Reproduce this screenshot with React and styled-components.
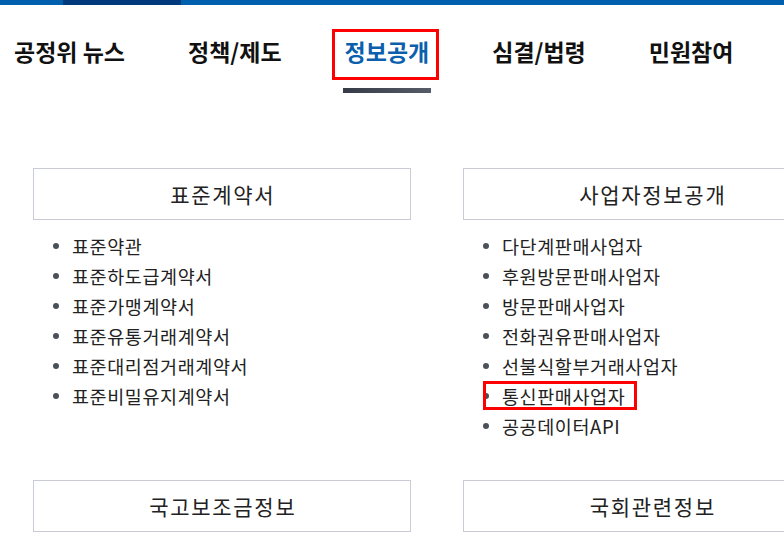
import React from 'react';
import styled, { createGlobalStyle } from 'styled-components';

const GlobalStyle = createGlobalStyle`
  html, body {
    margin: 0;
    padding: 0;
    background: #fff;
    overflow: hidden;
  }
  body {
    font-family: "Noto Sans CJK KR", "Noto Sans", sans-serif;
    color: #222;
  }
  * { box-sizing: border-box; }
`;

const TopBar = styled.div`
  height: 5px;
  background: #0060ae;
  padding-left: 63px;
`;

const TopBarSegment = styled.div`
  width: 118px;
  height: 100%;
  background: #003a7c;
`;

const Nav = styled.nav`
  display: flex;
  align-items: flex-start;
  gap: 63px;
  padding: 31px 0 0 14px;
  height: 92px;
`;

const NavItem = styled.div`
  display: flex;
  flex-direction: column;
`;

const NavLabel = styled.a`
  position: relative;
  font-size: 23px;
  font-weight: 700;
  line-height: 30px;
  white-space: nowrap;
  color: ${(p) => (p.$active ? '#0b5fad' : '#111')};
  text-decoration: none;

  ${(p) =>
    p.$marked &&
    `
    &::after {
      content: '';
      position: absolute;
      left: -13px;
      right: -10px;
      top: -7px;
      bottom: -14px;
      border: 3px solid #f00;
    }
  `}
`;

const Indicator = styled.span`
  display: block;
  height: 5px;
  margin: 22px -2px 0 -2px;
  background: linear-gradient(90deg, #363c47, #575d68);
`;

const Content = styled.main`
  display: grid;
  grid-template-columns: 378px 378px;
  column-gap: 52px;
  row-gap: 39px;
  padding: 71px 0 0 33px;
`;

const Section = styled.section`
  display: flex;
  flex-direction: column;
`;

const BoxTitle = styled.h2`
  margin: 0;
  height: 52px;
  display: flex;
  align-items: center;
  justify-content: center;
  border: 1px solid #c9ccd6;
  font-size: 21px;
  font-weight: 400;
  letter-spacing: 1.7px;
  text-indent: 1.7px;
  color: #222;
`;

const List = styled.ul`
  list-style: none;
  margin: 11px 0 0;
  padding: 0 0 0 20px;
`;

const Item = styled.li`
  position: relative;
  display: flex;
  align-items: center;
  gap: 13px;
  width: fit-content;
  font-size: 18.5px;
  letter-spacing: 0.6px;
  line-height: 30px;
  color: #222;
  white-space: nowrap;

  &::before {
    content: '';
    flex: none;
    width: 6px;
    height: 6px;
    border-radius: 50%;
    background: #4a4f58;
  }

  ${(p) =>
    p.$marked &&
    `
    &::after {
      content: '';
      position: absolute;
      left: 0;
      right: -12px;
      top: 0;
      bottom: 1px;
      border: 3px solid #f00;
    }
  `}
`;

const menu = [
  { label: '공정위 뉴스' },
  { label: '정책/제도' },
  { label: '정보공개', active: true },
  { label: '심결/법령' },
  { label: '민원참여' },
];

const sections = [
  {
    title: '표준계약서',
    items: ['표준약관', '표준하도급계약서', '표준가맹계약서', '표준유통거래계약서', '표준대리점거래계약서', '표준비밀유지계약서'],
  },
  {
    title: '사업자정보공개',
    items: ['다단계판매사업자', '후원방문판매사업자', '방문판매사업자', '전화권유판매사업자', '선불식할부거래사업자', '통신판매사업자', '공공데이터API'],
    marked: '통신판매사업자',
  },
  { title: '국고보조금정보', items: [] },
  { title: '국회관련정보', items: [] },
];

const App = () => {
  return (
    <>
      <GlobalStyle />
      <TopBar>
        <TopBarSegment />
      </TopBar>
      <Nav>
        {menu.map((m) => (
          <NavItem key={m.label}>
            <NavLabel href="#" $active={m.active} $marked={m.active}>
              {m.label}
            </NavLabel>
            {m.active && <Indicator />}
          </NavItem>
        ))}
      </Nav>
      <Content>
        {sections.map((s) => (
          <Section key={s.title}>
            <BoxTitle>{s.title}</BoxTitle>
            {s.items.length > 0 && (
              <List>
                {s.items.map((it) => (
                  <Item key={it} $marked={it === s.marked}>
                    {it}
                  </Item>
                ))}
              </List>
            )}
          </Section>
        ))}
      </Content>
    </>
  );
};

export default App;
